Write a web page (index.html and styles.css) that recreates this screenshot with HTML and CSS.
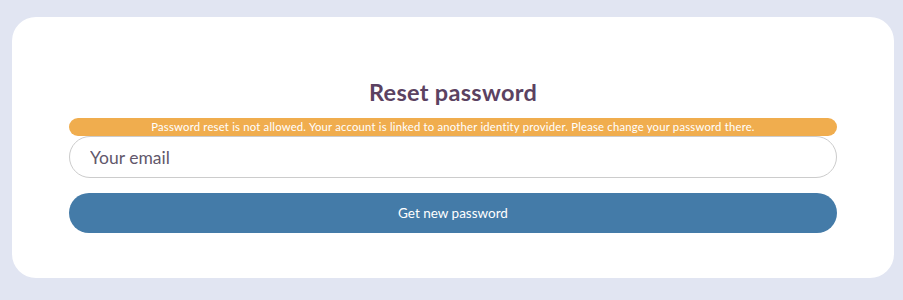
FILE: index.html
```html
<!DOCTYPE html>
<html>
<head>
<meta charset="utf-8">
<link rel="stylesheet" href="styles.css">
</head>
<body>
<div class="page">
  <div class="card">
    <h1 class="title">Reset password</h1>
    <div class="alert">Password reset is not allowed. Your account is linked to another identity provider. Please change your password there.</div>
    <input class="email" type="text" placeholder="Your email">
    <button class="submit">Get new password</button>
  </div>
</div>
</body>
</html>
```

FILE: styles.css
```css
html, body {
  margin: 0;
  padding: 0;
  background: #e1e5f2;
  font-family: "Lato", "Noto Sans", sans-serif;
}
.page {
  padding: 17px 9px 0 12px;
}
.card {
  background: #ffffff;
  border-radius: 24px;
  height: 261px;
  box-sizing: border-box;
  padding: 61px 57px 0 57px;
  display: flex;
  flex-direction: column;
}
.title {
  margin: 0 0 12px 0;
  text-align: center;
  font-size: 23.5px;
  font-weight: 700;
  color: #5b4261;
  line-height: 28px;
  letter-spacing: 0.3px;
}
.alert {
  background: #f0ad4e;
  color: #ffffff;
  border-radius: 9px;
  height: 18px;
  line-height: 18px;
  font-size: 11.3px;
  text-align: center;
  letter-spacing: 0.2px;
}
.email {
  display: block;
  box-sizing: border-box;
  width: 100%;
  height: 42px;
  border: 1px solid #cccccc;
  border-radius: 21px;
  padding: 0 20px;
  font-family: inherit;
  font-size: 17.5px;
  outline: none;
  margin: 0;
}
.email::placeholder {
  color: #62586b;
}
.submit {
  margin-top: 15px;
  height: 40px;
  border: none;
  border-radius: 20px;
  background: #447ba8;
  color: #ffffff;
  font-family: inherit;
  font-size: 13.5px;
  cursor: pointer;
}
```
